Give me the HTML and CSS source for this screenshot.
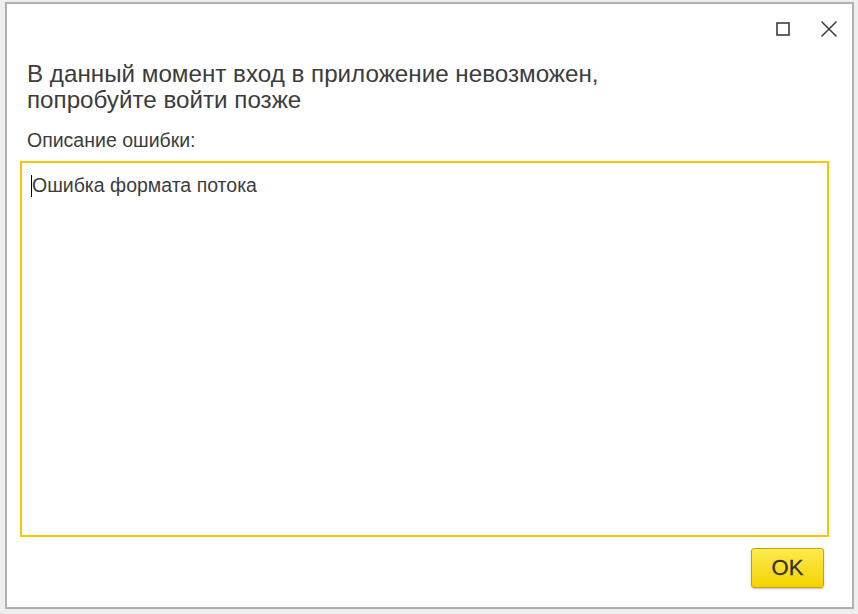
FILE: index.html
```html
<!DOCTYPE html>
<html lang="ru">
<head>
    <meta charset="UTF-8">
    <title>Ошибка входа</title>
    <link rel="stylesheet" href="styles.css">
</head>
<body>

    <div class="window">
        <div class="title-bar">
            <span class="btn-icon">
                <svg width="14" height="14" viewBox="0 0 14 14"><rect x="1" y="1" width="12" height="12" fill="none" stroke="#3c3c3c" stroke-width="1.6"/></svg>
            </span>
            <span class="btn-icon">
                <svg width="18" height="18" viewBox="0 0 18 18"><path d="M1.5 1.5 L16.5 16.5 M16.5 1.5 L1.5 16.5" stroke="#3c3c3c" stroke-width="1.5"/></svg>
            </span>
        </div>

        <div class="content">
            <h2 class="headline">В данный момент вход в приложение невозможен,<br>попробуйте войти позже</h2>
            <div class="label">Описание ошибки:</div>
            <div class="details">
                <span class="caret"></span>Ошибка формата потока
            </div>
            <div class="footer">
                <button class="ok-btn">OK</button>
            </div>
        </div>
    </div>

</body>
</html>
```

FILE: styles.css
```css
body {
    margin: 0;
    background-color: #efefef;
    font-family: Arial, "Liberation Sans", sans-serif;
    color: #3c3c3c;
}

.window {
    box-sizing: border-box;
    margin: 2px 0 0 5px;
    width: 849px;
    height: 607px;
    background-color: #fff;
    border: 2px solid #b0b0b0;
    display: flex;
    flex-direction: column;
}

.title-bar {
    display: flex;
    justify-content: flex-end;
    align-items: center;
    gap: 30px;
    height: 50px;
    padding-right: 14px;
}

.btn-icon {
    display: flex;
    align-items: center;
}

.content {
    flex: 1;
    display: flex;
    flex-direction: column;
    padding: 0 23px 0 13px;
}

.headline {
    margin: 7px 0 0 7px;
    font-size: 24.2px;
    font-weight: normal;
    line-height: 26px;
    color: #3c3c3c;
}

.label {
    margin: 16px 0 0 7px;
    font-size: 19.5px;
    line-height: 22px;
}

.details {
    box-sizing: border-box;
    margin-top: 10px;
    height: 376px;
    border: 2px solid #f7c600;
    padding: 11px 9px;
    font-size: 19.5px;
    line-height: 22px;
}

.caret {
    display: inline-block;
    width: 1px;
    height: 22px;
    background-color: #000;
    vertical-align: -5px;
}

.footer {
    display: flex;
    justify-content: flex-end;
    padding: 11px 5px 0 0;
}

.ok-btn {
    width: 73px;
    height: 40px;
    font-family: Arial, "Liberation Sans", sans-serif;
    font-size: 22px;
    color: #333;
    -webkit-text-stroke: 0.3px #333;
    background: linear-gradient(#fdeb4e, #f5d200);
    border: 1px solid #c5a500;
    border-radius: 3px;
    box-shadow: 0 1px 2px rgba(0, 0, 0, 0.25);
    cursor: pointer;
}
```
